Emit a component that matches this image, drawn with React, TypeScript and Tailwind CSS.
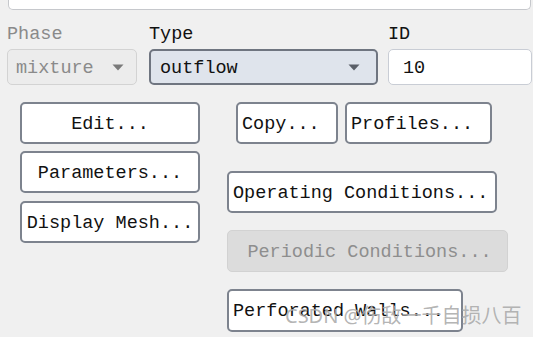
import React from "react";

const mono = "font-['Liberation_Mono',monospace] text-[18.5px]";

function Caret({ color }: { color: string }) {
  return (
    <svg width="12" height="7" viewBox="0 0 12 7" className="shrink-0 -mt-[2px]">
      <path d="M0.5 0.5H11.5L6 6.5Z" fill={color} />
    </svg>
  );
}

function Btn({
  label,
  className,
  center,
  disabled,
}: {
  label: string;
  className: string;
  center?: boolean;
  disabled?: boolean;
}) {
  return (
    <div
      className={`flex items-center h-[42px] pt-[3px] rounded-[5px] whitespace-nowrap ${
        center ? "justify-center" : "pl-[4px]"
      } ${
        disabled
          ? "bg-[#dcdcdc] border border-[#d2d2d2] text-[#8e8e8e] justify-center"
          : "bg-white border-2 border-[#7d838e] text-[#111]"
      } ${className}`}
    >
      {label}
    </div>
  );
}

export default function App() {
  return (
    <div className={`relative w-[533px] h-[337px] overflow-hidden bg-[#f0f0f0] ${mono}`}>
      {/* panel above, cut off */}
      <div className="ml-[8px] w-[523px] h-[10px] bg-white border border-t-0 border-[#c6c8cc] rounded-b-[5px]" />

      {/* labels */}
      <div className="flex mt-[15px] h-[20px] leading-[20px] pl-[7px]">
        <div className="w-[130px] text-[#8a8a8a]">Phase</div>
        <div className="w-[229px] ml-[12px] text-[#111]">Type</div>
        <div className="w-[144px] ml-[10px] text-[#111]">ID</div>
      </div>

      {/* fields */}
      <div className="flex mt-[4px] h-[36px] pl-[7px]">
        <div className="w-[130px] flex items-center justify-between pt-[3px] pl-[8px] pr-[12px] bg-[#ececec] border border-[#d3d3d3] rounded-[5px] text-[#8a8a8a]">
          <span>mixture</span>
          <Caret color="#7a7a7a" />
        </div>
        <div className="w-[229px] ml-[12px] flex items-center justify-between pt-[3px] pl-[9px] pr-[16px] bg-[#dfe4ec] border-2 border-[#6f7580] rounded-[5px] text-[#111]">
          <span>outflow</span>
          <Caret color="#5a5f68" />
        </div>
        <div className="w-[144px] ml-[10px] flex items-center pt-[3px] pl-[14px] bg-white border border-[#c9cdd5] rounded-[5px] text-[#111]">
          10
        </div>
      </div>

      {/* buttons */}
      <div className="flex mt-[17px]">
        <div className="flex flex-col ml-[20px] w-[180px]">
          <Btn label="Edit..." center className="w-[180px]" />
          <Btn label="Parameters..." center className="w-[180px] mt-[7px]" />
          <Btn label="Display Mesh..." center className="w-[180px] mt-[8px]" />
        </div>
        <div className="flex flex-col ml-[27px]">
          <div className="flex ml-[9px]">
            <Btn label="Copy..." className="w-[102px]" />
            <Btn label="Profiles..." className="w-[147px] ml-[7px]" />
          </div>
          <Btn label="Operating Conditions..." className="w-[270px] mt-[27px]" />
          <Btn label="Periodic Conditions..." disabled className="w-[281px] mt-[17px]" />
          <Btn label="Perforated Walls..." className="w-[236px] mt-[17px] h-[43px]" />
        </div>
      </div>

      {/* watermark */}
      <div className="absolute left-[285px] top-[302px] text-[20px] leading-[28px] text-[#ababab]/90 font-['Noto_Sans','Noto_Sans_CJK_SC',sans-serif] whitespace-nowrap">
        CSDN @伤敌一千自损八百
      </div>
    </div>
  );
}
